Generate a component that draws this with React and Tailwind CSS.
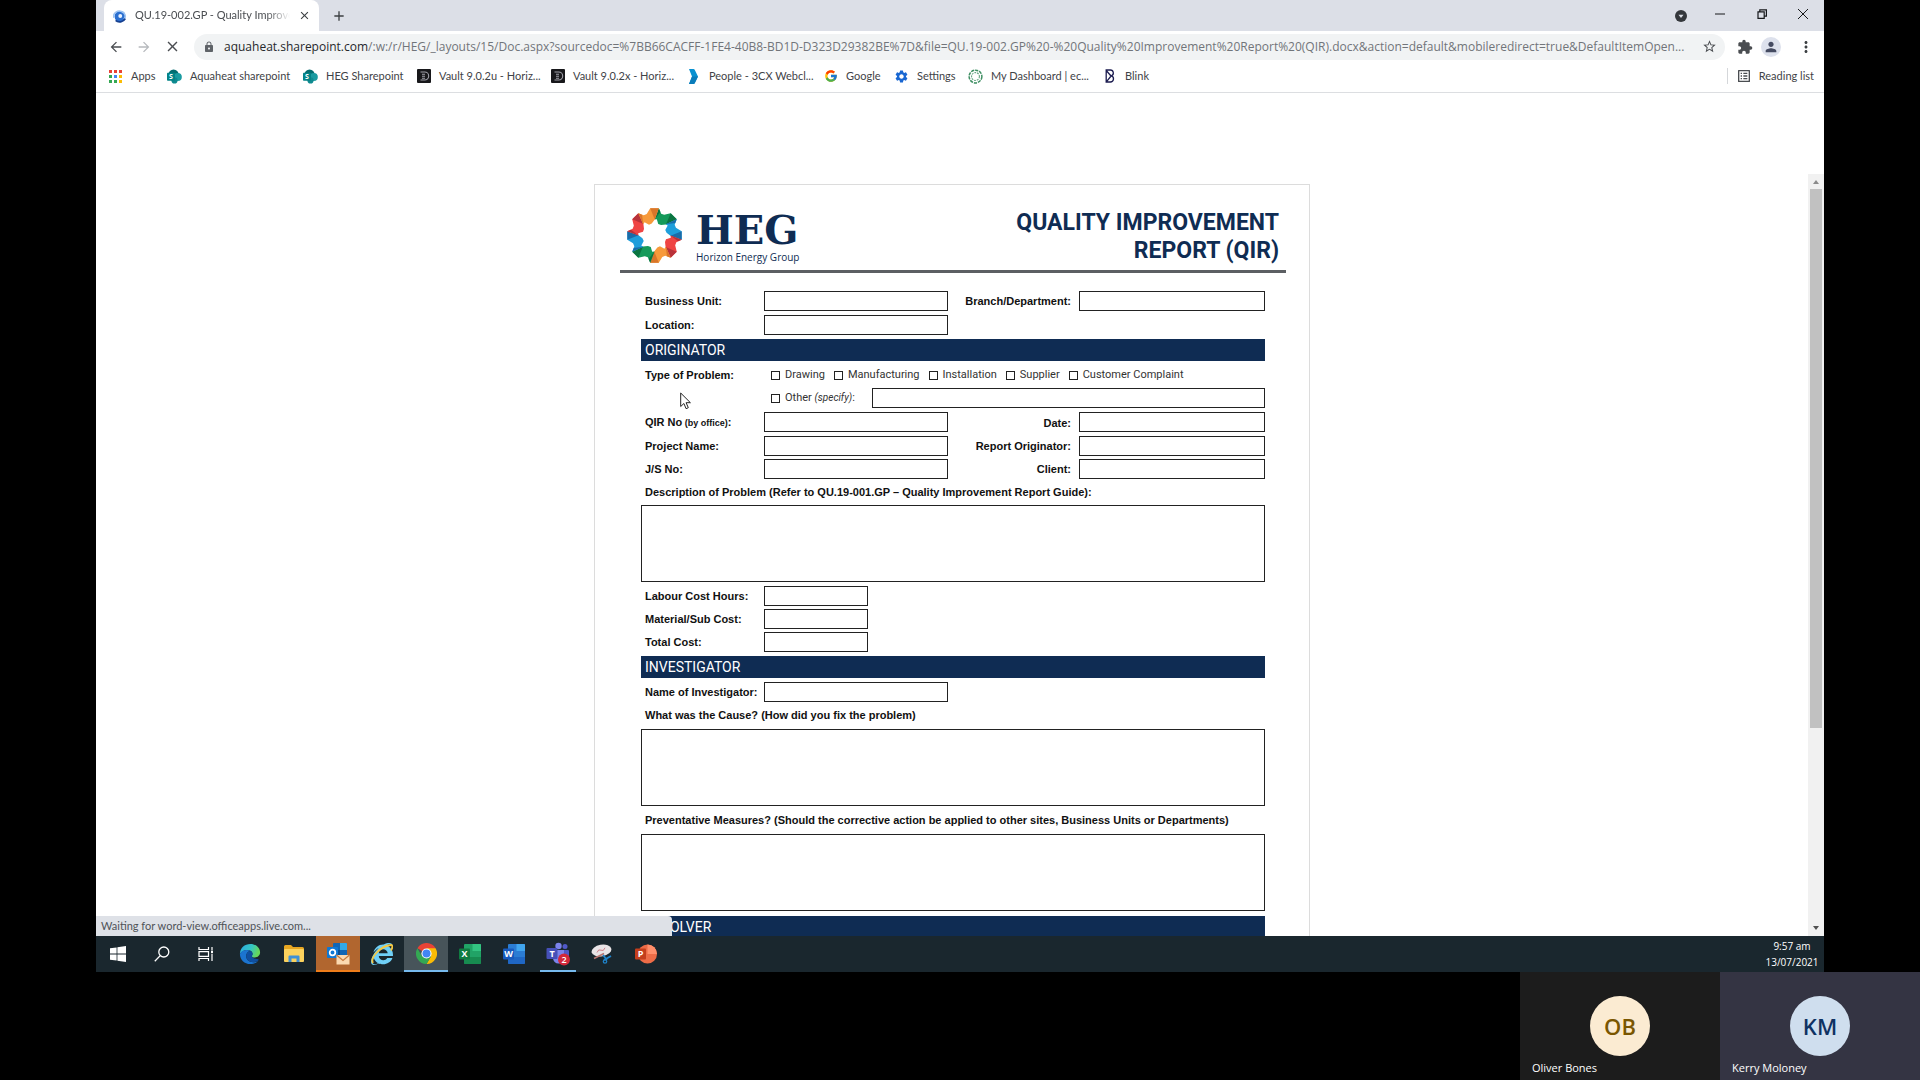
import React from "react";
import {
  MdArrowBack, MdArrowForward, MdClose, MdLock, MdStarBorder, MdExtension,
  MdPerson, MdMoreVert, MdSettings, MdListAlt, MdAdd,
} from "react-icons/md";
import { FcGoogle } from "react-icons/fc";
import { FaInternetExplorer } from "react-icons/fa";

/* ---------- brand drawings ---------- */

const EMBLEM = [
  ["#159a5a", "#0b7440"],
  ["#1f9edb", "#1b6ca8"],
  ["#ef4444", "#b8323a"],
  ["#f79a3b", "#d9762a"],
  ["#159a5a", "#0b7440"],
  ["#1f9edb", "#1b6ca8"],
  ["#ef4444", "#b8323a"],
  ["#f79a3b", "#d9762a"],
];

function polar(list) {
  return list
    .map(([a, r]) => {
      const t = (a * Math.PI) / 180;
      return `${(Math.sin(t) * r).toFixed(1)},${(-Math.cos(t) * r).toFixed(1)}`;
    })
    .join(" ");
}

function Emblem() {
  return (
    <svg viewBox="-100 -100 200 200" className="size-[55px] shrink-0" aria-hidden="true">
      {EMBLEM.map(([light, dark], i) => (
        <g key={i} transform={`rotate(${i * 45})`}>
          <polygon points={polar([[9, 100], [17, 83], [25, 83], [36, 100], [54, 100], [46, 58], [32, 45], [18, 44], [8, 60], [0, 58]])} fill={light} />
          <polygon points={polar([[36, 100], [54, 100], [46, 58]])} fill={dark} />
          <polygon points={polar([[9, 100], [14, 88], [0, 58]])} fill={dark} />
        </g>
      ))}
    </svg>
  );
}

function SharePoint() {
  return (
    <svg viewBox="0 0 16 16" className="size-[15px]" aria-hidden="true">
      <circle cx="7" cy="6" r="5.5" fill="#036c70" />
      <circle cx="11.5" cy="8.5" r="4.3" fill="#1a9ba1" />
      <circle cx="8" cy="12.2" r="3.3" fill="#0f8a90" />
      <rect x="0" y="4" width="8.5" height="8.5" rx="0.8" fill="#038387" />
      <text x="4.2" y="11" textAnchor="middle" fontSize="7.5" fontWeight="700" fill="#fff" fontFamily="Open Sans, sans-serif">S</text>
    </svg>
  );
}

function Vault() {
  return (
    <svg viewBox="0 0 14 14" className="size-[14px]" aria-hidden="true">
      <rect width="14" height="14" rx="1" fill="#18181b" />
      <path d="M3.5 3h4.2a3.8 3.8 0 0 1 0 8H3.5M5 5.2h3M5 7.2h3M5 9.2h3" stroke="#a1a1aa" strokeWidth="1.1" fill="none" />
    </svg>
  );
}

function AppsGrid() {
  const c = ["#ea4335", "#ea4335", "#ea4335", "#34a853", "#4285f4", "#fbbc05", "#34a853", "#34a853", "#fbbc05"];
  return (
    <svg viewBox="0 0 13 13" className="size-[13px]" aria-hidden="true">
      {c.map((f, i) => <rect key={i} x={(i % 3) * 5} y={Math.floor(i / 3) * 5} width="3" height="3" fill={f} />)}
    </svg>
  );
}

function ThreeCx() {
  return (
    <svg viewBox="0 0 9 15" className="h-[15px] w-[9px]" aria-hidden="true">
      <path d="M0 0h4.500q.8 0 1.200.8L9 7.5 5.700 14.200q-.4.8-1.200.8H0l3-7.500z" fill="#0891d1" />
      <path d="M0 15h4.500q.8 0 1.200-.8L9 7.500H3z" fill="#0a7cba" />
    </svg>
  );
}

function Dashboard() {
  return (
    <svg viewBox="0 0 16 16" className="size-[15px]" aria-hidden="true">
      <circle cx="8" cy="8" r="6.8" fill="none" stroke="#3f8f63" strokeWidth="1.6" strokeDasharray="3.4 1" />
      <circle cx="8" cy="8" r="4.2" fill="none" stroke="#6aa886" strokeWidth="1.2" strokeDasharray="2 1" />
    </svg>
  );
}

function Blink() {
  return (
    <svg viewBox="0 0 10 14" className="h-[14px] w-[10px]" aria-hidden="true">
      <path d="M1.2 1v12h4.2a3.2 3.2 0 0 0 1-6.2A3 3 0 0 0 5.4 1zM1.200 1.500l5.300 6M6.500 6.500 1.500 12.600" fill="none" stroke="#1c1c50" strokeWidth="1.300" />
    </svg>
  );
}

function Loading() {
  return (
    <svg viewBox="0 0 16 16" className="size-[14px] shrink-0" aria-hidden="true">
      <circle cx="8" cy="8.5" r="6.2" fill="#2b6fd0" />
      <path d="M1 10C-.5 4 6 1 10 3c4 1 5 6 2.5 8.500" fill="none" stroke="#9cc3f2" strokeWidth="1.8" />
      <circle cx="8.300" cy="8" r="2.200" fill="#e8f1fd" />
      <path d="M3 13c3 3 9 2 11-2" fill="none" stroke="#153f8f" strokeWidth="2" />
    </svg>
  );
}

/* ---------- taskbar drawings ---------- */

function Windows() {
  return (
    <svg viewBox="0 0 16 16" className="size-4" fill="#fff" aria-hidden="true">
      <path d="M0 2.300 6.600 1.400v6.200H0zM7.400 1.300 16 0v7.600H7.400zM0 8.400h6.600v6.200L0 13.700zM7.400 8.400H16V16l-8.600-1.200z" />
    </svg>
  );
}
function SearchGlyph() {
  return (
    <svg viewBox="0 0 16 16" className="size-4" fill="none" stroke="#fff" strokeWidth="1.300" aria-hidden="true">
      <circle cx="9.800" cy="6" r="5" /><path d="M6.200 9.600.8 15.200" />
    </svg>
  );
}
function TaskView() {
  return (
    <svg viewBox="0 0 16 14" className="h-[14px] w-4" fill="none" stroke="#fff" strokeWidth="1.200" aria-hidden="true">
      <path d="M1 0v2.500h9.500V0M1 14v-2.500h9.500V14M1 4.600h9.500v4.800H1zM14 0v3M14 7v7" /><rect x="13" y="3.600" width="2" height="2.600" fill="#fff" stroke="none" />
    </svg>
  );
}
function Edge() {
  return (
    <svg viewBox="0 0 24 24" className="size-[22px]" aria-hidden="true">
      <defs>
        <linearGradient id="edgeTop" x1="0" y1="0" x2="1" y2="0.300">
          <stop offset="0" stopColor="#2aa7e6" /><stop offset="0.600" stopColor="#35c6c3" /><stop offset="1" stopColor="#66d85a" />
        </linearGradient>
      </defs>
      <path d="M1 12C1 5.500 6 1 12.500 1 19 1 23 5.800 23 10.200c0 3.600-2.800 5.600-5.600 5.600-2.400 0-3.600-.9-3.400-1.600.3-.6.8-1.200.8-2.500C14.800 9.500 12.500 7.600 9 7.600 5 7.600 2 9.500 1 12z" fill="url(#edgeTop)" />
      <path d="M1 12c1-2.600 3.800-4.400 7.500-4.400 1.600 0 3 .4 4 1.200-3 .4-4.700 2.800-4.700 5.500 0 4.200 3.700 6.700 7.800 6.700 2.200 0 4-.6 5.400-1.300C19 21.800 15.800 23 12.300 23 6 23 1 18.400 1 12z" fill="#1b74d0" />
      <path d="M7.800 14.300c0-2.700 1.700-5.100 4.700-5.500 1.400.8 2.300 1.900 2.300 3.100-.1 1.200-.8 1.700-.8 2.300.2 1.500 1.900 3.200 6.800 3.400.7 0 .9.700.4 1.300-1.700 1.500-3.600 2.100-5.600 2.100-4.100 0-7.800-2.500-7.800-6.700z" fill="#0f4fa0" />
    </svg>
  );
}
function Folder() {
  return (
    <svg viewBox="0 0 20 17" className="h-[17px] w-5" aria-hidden="true">
      <path d="M0 1.500Q0 0 1.500 0H7l2 2h9.500Q20 2 20 3.500V6H0z" fill="#e8a722" />
      <rect y="4" width="20" height="13" rx="1" fill="#fcd25d" />
      <path d="M4.500 17v-5.500q0-1 1-1h9q1 0 1 1V17h-3v-3.500h-5V17z" fill="#3f90d6" />
    </svg>
  );
}
function Outlook() {
  return (
    <svg viewBox="0 0 24 24" className="size-6" aria-hidden="true">
      <rect x="7" y="1" width="14" height="14" rx="1" fill="#1066b5" />
      <path d="M14 1h6q1 0 1 1v6h-7z" fill="#32a9e7" />
      <rect x="7" y="8" width="7" height="7" fill="#0a4f94" />
      <rect x="1" y="5" width="11" height="11" rx="1" fill="#0f78d4" />
      <circle cx="6.500" cy="10.500" r="2.800" fill="none" stroke="#fff" strokeWidth="1.700" />
      <rect x="10.500" y="13" width="13" height="9.500" fill="#fbd9b0" />
      <path d="m10.500 13 6.500 5.500 6.500-5.500" fill="none" stroke="#c77a3c" strokeWidth="1.200" />
    </svg>
  );
}
function Explorer() {
  return (
    <span className="relative block size-[22px]">
      <FaInternetExplorer className="size-[22px] text-[#6fd0f7]" />
      <svg viewBox="0 0 22 22" className="absolute inset-0" aria-hidden="true">
        <path d="M2 20C-1 15 9 3 20 2c2 0 1.500 3 0 5.500" fill="none" stroke="#f5c842" strokeWidth="1.800" />
      </svg>
    </span>
  );
}
function Chrome() {
  return (
    <svg viewBox="0 0 24 24" className="size-[21px]" aria-hidden="true">
      <path d="M12 12 1.600 6A12 12 0 0 1 22.400 6z" fill="#e94335" />
      <path d="M12 6h10.400A12 12 0 0 1 12 24l5.200-9z" fill="#fbbc05" />
      <path d="M6.800 15 1.600 6A12 12 0 0 0 12 24l5.200-9z" fill="#34a853" />
      <circle cx="12" cy="12" r="5.800" fill="#fff" />
      <circle cx="12" cy="12" r="4.600" fill="#4285f4" />
    </svg>
  );
}
function OfficeApp({ letter, dark, mid, light, round }) {
  return (
    <svg viewBox="0 0 22 20" className="h-5 w-[22px]" aria-hidden="true">
      {round ? (
        <>
          <circle cx="12.500" cy="10" r="9.500" fill={mid} />
          <path d="M12.500.5a9.500 9.500 0 0 1 9.500 9.500h-9.500z" fill={light} />
        </>
      ) : (
        <>
          <rect x="5" width="17" height="20" rx="1" fill={mid} />
          <path d="M13.500 0H21q1 0 1 1v6h-8.500z" fill={light} />
          <path d="M5 13h17v6q0 1-1 1H6q-1 0-1-1z" fill={dark} opacity="0.600" />
        </>
      )}
      <rect y="4.500" width="11" height="11" rx="1" fill={dark} />
      <text x="5.500" y="13.300" textAnchor="middle" fontSize="9" fontWeight="700" fill="#fff" fontFamily="Open Sans, sans-serif">{letter}</text>
    </svg>
  );
}
function Teams() {
  return (
    <svg viewBox="0 0 24 24" className="size-6" aria-hidden="true">
      <circle cx="12.500" cy="4" r="3.200" fill="#7b83eb" />
      <circle cx="19" cy="4.500" r="2.500" fill="#5059c9" />
      <path d="M15 8h7q1 0 1 1v6a4 4 0 0 1-8 0z" fill="#5059c9" />
      <path d="M7 8h11v8a5.500 5.500 0 0 1-11 0z" fill="#7b83eb" />
      <rect x="0.500" y="6" width="11" height="11" rx="1" fill="#4650b8" />
      <text x="6" y="15" textAnchor="middle" fontSize="9" fontWeight="700" fill="#fff" fontFamily="Open Sans, sans-serif">T</text>
      <circle cx="18" cy="17.500" r="6" fill="#d3283b" />
      <text x="18" y="21" textAnchor="middle" fontSize="9" fontWeight="600" fill="#fff" fontFamily="Open Sans, sans-serif">2</text>
    </svg>
  );
}
function Snip() {
  return (
    <svg viewBox="0 0 22 20" className="h-5 w-[22px]" aria-hidden="true">
      <ellipse cx="10.500" cy="6.500" rx="10" ry="5.800" fill="#e9e4e6" transform="rotate(-10 10.500 6.500)" />
      <path d="M6 8.500q1.500-4 4-2.300t4-2.400" fill="none" stroke="#cf7f88" strokeWidth="1" />
      <path d="M3 14.500 13 9.500" stroke="#b9746f" strokeWidth="1.800" />
      <path d="m12 11 4 5M20 12l-7 4" stroke="#1f82c9" strokeWidth="1.800" />
      <circle cx="14" cy="17.500" r="1.700" fill="none" stroke="#1f82c9" strokeWidth="1.300" />
    </svg>
  );
}

/* ---------- browser ---------- */

function WindowTabs() {
  return (
    <div className="flex h-[31px] shrink-0 items-stretch bg-[#dcdfe7] pl-2">
      <div className="flex w-[215px] items-center gap-2 rounded-t-lg bg-white pr-2 pl-[9px]">
        <Loading />
        <span className="min-w-0 flex-1 mask-r-from-85% font-['Lato',sans-serif] text-[11px] whitespace-nowrap text-[#4a4d51]">
          QU.19-002.GP - Quality Improve
        </span>
        <button aria-label="Close tab"><MdClose className="size-[13px] text-[#3c4043]" /></button>
      </div>
      <button aria-label="New tab" className="ml-3 self-center"><MdAdd className="size-4 text-[#3c4043]" /></button>
      <div className="ml-auto flex items-center pb-1 text-[#16181b]">
        <button aria-label="Search tabs" className="flex w-[34px] justify-center pt-1">
          <svg viewBox="0 0 12 12" className="size-3"><circle cx="6" cy="6" r="6" fill="#34373c" /><path d="M3.500 4.800h5L6 8z" fill="#dcdfe7" /></svg>
        </button>
        <button aria-label="Minimise" className="flex w-11 justify-center">
          <svg viewBox="0 0 10 10" className="size-[10px]"><path d="M0 5h10" stroke="currentColor" /></svg>
        </button>
        <button aria-label="Restore" className="flex w-10 justify-center">
          <svg viewBox="0 0 10 10" className="size-[10px]" fill="none" stroke="currentColor" strokeWidth="1.200"><path d="M1 2.800h6.200V9.400H1zM2.800 2.800V.8h6.600v6.400H7.200" /></svg>
        </button>
        <button aria-label="Close" className="flex w-[42px] justify-center">
          <svg viewBox="0 0 10 10" className="size-[10px]" stroke="currentColor"><path d="m0 0 10 10M10 0 0 10" /></svg>
        </button>
      </div>
    </div>
  );
}

const QUERY =
  "/:w:/r/HEG/_layouts/15/Doc.aspx?sourcedoc=%7BB66CACFF-1FE4-40B8-BD1D-D323D29382BE%7D&file=QU.19-002.GP%20-%20Quality%20Improvement%20Report%20(QIR).docx&action=default&mobileredirect=true&DefaultItemOpen...";

function AddressBar() {
  return (
    <div className="flex h-[31px] shrink-0 items-center bg-white pr-[9px] pl-3">
      <button aria-label="Back" className="w-7"><MdArrowBack className="size-4 text-[#4a4d51]" /></button>
      <button aria-label="Forward" className="w-7"><MdArrowForward className="size-4 text-[#b6b9bd]" /></button>
      <button aria-label="Stop loading" className="w-[30px]"><MdClose className="size-[17px] text-[#4a4d51]" /></button>
      <div className="flex h-[26px] min-w-0 flex-1 items-center rounded-full bg-[#f1f3f4] pr-2 pl-[9px]">
        <MdLock className="size-3 shrink-0 text-[#5f6368]" />
        <a href="#url" className="ml-[9px] min-w-0 flex-1 overflow-hidden font-['Open_Sans',sans-serif] text-[12px] whitespace-nowrap text-[#71757a]">
          <span className="text-[#26282b]">aquaheat.sharepoint.com</span>{QUERY}
        </a>
        <button aria-label="Bookmark this page"><MdStarBorder className="size-[15px] text-[#4a4d51]" /></button>
      </div>
      <div className="ml-3 flex items-center gap-2">
        <button aria-label="Extensions"><MdExtension className="size-4 text-[#4a4d51]" /></button>
        <button aria-label="Profile" className="flex size-5 items-center justify-center rounded-full bg-[#dde1ec]"><MdPerson className="size-4 text-[#454b61]" /></button>
        <button aria-label="Menu" className="ml-2"><MdMoreVert className="size-[18px] text-[#3c4043]" /></button>
      </div>
    </div>
  );
}

const BOOKMARKS = [
  ["Apps", AppsGrid, "w-[59px]"],
  ["Aquaheat sharepoint", SharePoint, "w-[136px]"],
  ["HEG Sharepoint", SharePoint, "w-[113px]"],
  ["Vault 9.0.2u - Horiz...", Vault, "w-[134px]"],
  ["Vault 9.0.2x - Horiz...", Vault, "w-[136px]"],
  ["People - 3CX Webcl...", ThreeCx, "w-[137px]"],
  ["Google", () => <FcGoogle className="size-[14px]" />, "w-[71px]"],
  ["Settings", () => <MdSettings className="size-[15px] text-[#1967d2]" />, "w-[74px]"],
  ["My Dashboard | ec...", Dashboard, "w-[134px]"],
  ["Blink", Blink, "w-[60px]"],
];

function BookmarkBar() {
  return (
    <nav className="flex h-[31px] shrink-0 items-center border-b border-[#dcdee1] bg-white pr-[10px] pb-[2px] pl-3 font-['Lato',sans-serif] text-[11px] text-[#3f4347]">
      {BOOKMARKS.map(([name, Icon, width]) => (
        <a key={name} href="#bookmark" className={`flex items-center gap-2 whitespace-nowrap ${width}`}>
          <span className="flex w-[15px] shrink-0 justify-center"><Icon /></span>
          {name}
        </a>
      ))}
      <button className="ml-auto flex items-center gap-[7px] border-l border-[#d5d7da] pl-2 whitespace-nowrap">
        <MdListAlt className="size-4 text-[#4a4d51]" />Reading list
      </button>
    </nav>
  );
}

/* ---------- report form ---------- */

function Field({ id, label, note, right }) {
  return (
    <>
      <label htmlFor={id} className={right ? "self-center pr-2 text-right" : "self-center pl-1"}>
        {label}{note && <span className="text-[9px]"> {note}</span>}{":"}
      </label>
      <input id={id} className="h-5 w-full min-w-0 border border-[#222] bg-white px-1 font-normal outline-none" />
    </>
  );
}

const ROW = "grid grid-cols-[123px_184px_1fr_186px] gap-y-[3px]";

function SectionBar({ children }) {
  return <h2 className="flex h-[22px] shrink-0 items-center bg-[#0f2c53] pl-1 font-['Roboto',sans-serif] text-[14px] font-normal text-white">{children}</h2>;
}

function Box({ id, label }) {
  return (
    <>
      <label htmlFor={id} className="block pl-1 leading-[18px]">{label}</label>
      <textarea id={id} className="block h-[77px] w-full shrink-0 resize-none border border-[#222] bg-white p-1 font-normal outline-none" />
    </>
  );
}

function Tick({ children }) {
  return (
    <label className="flex items-center gap-[5px] font-['Roboto',sans-serif] font-normal whitespace-nowrap text-[#333]">
      <input type="checkbox" className="size-[9px] shrink-0 appearance-none border border-[#222] bg-white checked:bg-[#222]" />
      <span>{children}</span>
    </label>
  );
}

function Report() {
  return (
    <article className="mx-auto w-[716px] border border-[#dcdcdc] bg-white font-['Roboto',sans-serif] text-[#0f2c53]">
      <header className="ml-[25px] mr-[23px] flex h-[88px] items-start border-b-3 border-[#5c5f63] pt-[23px]">
        <div className="flex gap-[14px] pl-[7px]">
          <Emblem />
          <div className="flex flex-col">
            <span className="font-['DejaVu_Serif',serif] text-[40px] leading-[44px] font-bold">HEG</span>
            <span className="font-['Open_Sans',sans-serif] text-[10px] leading-[10px] font-medium">Horizon Energy Group</span>
          </div>
        </div>
        <h1 className="mt-px ml-auto w-[280px] pr-[7px] text-right text-[23px] leading-7 font-bold">QUALITY IMPROVEMENT REPORT (QIR)</h1>
      </header>

      <form className="relative mt-[18px] mr-[44px] ml-[46px] flex flex-col gap-1 font-['Liberation_Sans',Arial,sans-serif] text-[11px] leading-5 font-bold text-[#111]">
        <div className={ROW}>
          <Field id="unit" label="Business Unit" />
          <Field id="branch" label="Branch/Department" right />
        </div>
        <div className={ROW}><Field id="location" label="Location" /></div>
        <SectionBar>ORIGINATOR</SectionBar>
        <fieldset className="flex flex-col gap-[3px]">
          <div className="flex items-center">
            <legend className="float-left w-[130px] pl-1">Type of Problem:</legend>
            <div className="flex gap-[9px]">
              <Tick>Drawing</Tick>
              <Tick>Manufacturing</Tick>
              <Tick>Installation</Tick>
              <Tick>Supplier</Tick>
              <Tick>Customer Complaint</Tick>
            </div>
          </div>
          <div className="flex pl-[130px]">
            <div className="w-[101px]">
              <Tick>Other <i className="text-[10px]">(specify)</i>:</Tick>
            </div>
            <input aria-label="Other problem type" className="h-5 min-w-0 flex-1 border border-[#222] bg-white px-1 font-normal outline-none" />
          </div>
        </fieldset>
        <div className={ROW}>
          <Field id="qir" label="QIR No" note="(by office)" />
          <Field id="date" label="Date" right />
          <Field id="project" label="Project Name" />
          <Field id="originator" label="Report Originator" right />
          <Field id="job" label="J/S No" />
          <Field id="client" label="Client" right />
        </div>
        <Box id="description" label="Description of Problem (Refer to QU.19-001.GP – Quality Improvement Report Guide):" />
        <div className="grid grid-cols-[123px_104px] gap-y-[3px]">
          <Field id="labour" label="Labour Cost Hours" />
          <Field id="material" label="Material/Sub Cost" />
          <Field id="total" label="Total Cost" />
        </div>
        <SectionBar>INVESTIGATOR</SectionBar>
        <div className={ROW}><Field id="investigator" label="Name of Investigator" /></div>
        <div className="flex flex-col gap-[5px]">
          <Box id="cause" label="What was the Cause? (How did you fix the problem)" />
          <Box id="measures" label="Preventative Measures? (Should the corrective action be applied to other sites, Business Units or Departments)" />
          <SectionBar>RESOLVER</SectionBar>
        </div>
        <svg viewBox="0 0 12 18" className="absolute top-[101px] left-[39px] h-[18px] w-3" aria-hidden="true">
          <path d="M.7 1v13.500l3.200-3 2.200 5.200 2.200-1-2.200-5h4.300z" fill="#fff" stroke="#222" />
        </svg>
      </form>
    </article>
  );
}

function Scrollbar() {
  return (
    <div className="flex w-4 shrink-0 flex-col items-center bg-[#f1f1f1]">
      <button aria-label="Scroll up" type="button" className="flex h-[15px] w-full items-center justify-center">
        <svg viewBox="0 0 6 4" className="h-1 w-[6px]"><path d="M0 4h6L3 0z" fill="#8a8a8a" /></svg>
      </button>
      <div className="h-[539px] w-3 bg-[#c1c1c1]" />
      <button aria-label="Scroll down" type="button" className="mt-auto flex h-4 w-full items-center justify-center">
        <svg viewBox="0 0 6 4" className="h-1 w-[6px]"><path d="M0 0h6L3 4z" fill="#505050" /></svg>
      </button>
    </div>
  );
}

/* ---------- taskbar and call ---------- */

const TASKS = [
  ["Start", <Windows />], ["Search", <SearchGlyph />], ["Task view", <TaskView />],
  ["Edge", <Edge />], ["File Explorer", <Folder />],
  ["Outlook", <Outlook />, "bg-[#b1662f] border-[#ef7d1a]"],
  ["Internet Explorer", <Explorer />],
  ["Chrome", <Chrome />, "bg-[#47545a] border-[#76b9ed]"],
  ["Excel", <OfficeApp letter="X" dark="#107c41" mid="#21a366" light="#33c481" />],
  ["Word", <OfficeApp letter="W" dark="#185abd" mid="#2b7cd3" light="#41a5ee" />],
  ["Teams", <Teams />, "border-[#76b9ed] mx-1"],
  ["Snipping Tool", <Snip />],
  ["PowerPoint", <OfficeApp letter="P" dark="#c43e1c" mid="#ed6c47" light="#ff8f6b" round />],
];

function Taskbar() {
  return (
    <footer className="flex h-9 shrink-0 bg-[#1a272e]">
      {TASKS.map(([name, icon, state]) => (
        <div key={name} className="flex w-11">
          <button aria-label={name} className={`flex flex-1 items-center justify-center border-b-2 pt-px ${state || "border-transparent"}`}>{icon}</button>
        </div>
      ))}
      <div className="ml-auto flex w-16 flex-col justify-center text-center font-['Open_Sans',sans-serif] text-[10px] leading-4 text-white">
        <span>9:57 am</span><span>13/07/2021</span>
      </div>
    </footer>
  );
}

function Tile({ initials, name, tone, avatar }) {
  return (
    <div className={`relative flex w-[200px] items-center justify-center ${tone}`}>
      <span className={`flex size-[60px] items-center justify-center rounded-full text-[22px] font-semibold ${avatar}`}>{initials}</span>
      <span className="absolute bottom-1 left-3 text-[11px] leading-4 text-white">{name}</span>
    </div>
  );
}

export default function App() {
  return (
    <div className="flex h-screen flex-col overflow-hidden bg-black">
      <div className="mx-24 flex min-h-0 flex-1 flex-col">
        <WindowTabs />
        <AddressBar />
        <BookmarkBar />
        <main className="relative flex min-h-0 flex-1 flex-col bg-white pt-[81px]">
          <div className="flex min-h-0 flex-1">
            <div className="min-w-0 flex-1 overflow-hidden pt-[10px]"><Report /></div>
            <Scrollbar />
          </div>
          <div className="absolute bottom-0 left-0 h-5 w-1/3 rounded-tr bg-[#dee1e7] pl-[5px] font-['Lato',sans-serif] text-[11px] leading-5 text-[#4f5358]">
            Waiting for word-view.officeapps.live.com...
          </div>
        </main>
        <Taskbar />
      </div>
      <div className="flex h-[108px] shrink-0 justify-end font-['Open_Sans',sans-serif]">
        <Tile initials="OB" name="Oliver Bones" tone="bg-[#1c1c1c]" avatar="bg-[#fbebd2] text-[#7a5600]" />
        <Tile initials="KM" name="Kerry Moloney" tone="bg-[#343443]" avatar="bg-[#cfdeee] text-[#0f3263]" />
      </div>
    </div>
  );
}
